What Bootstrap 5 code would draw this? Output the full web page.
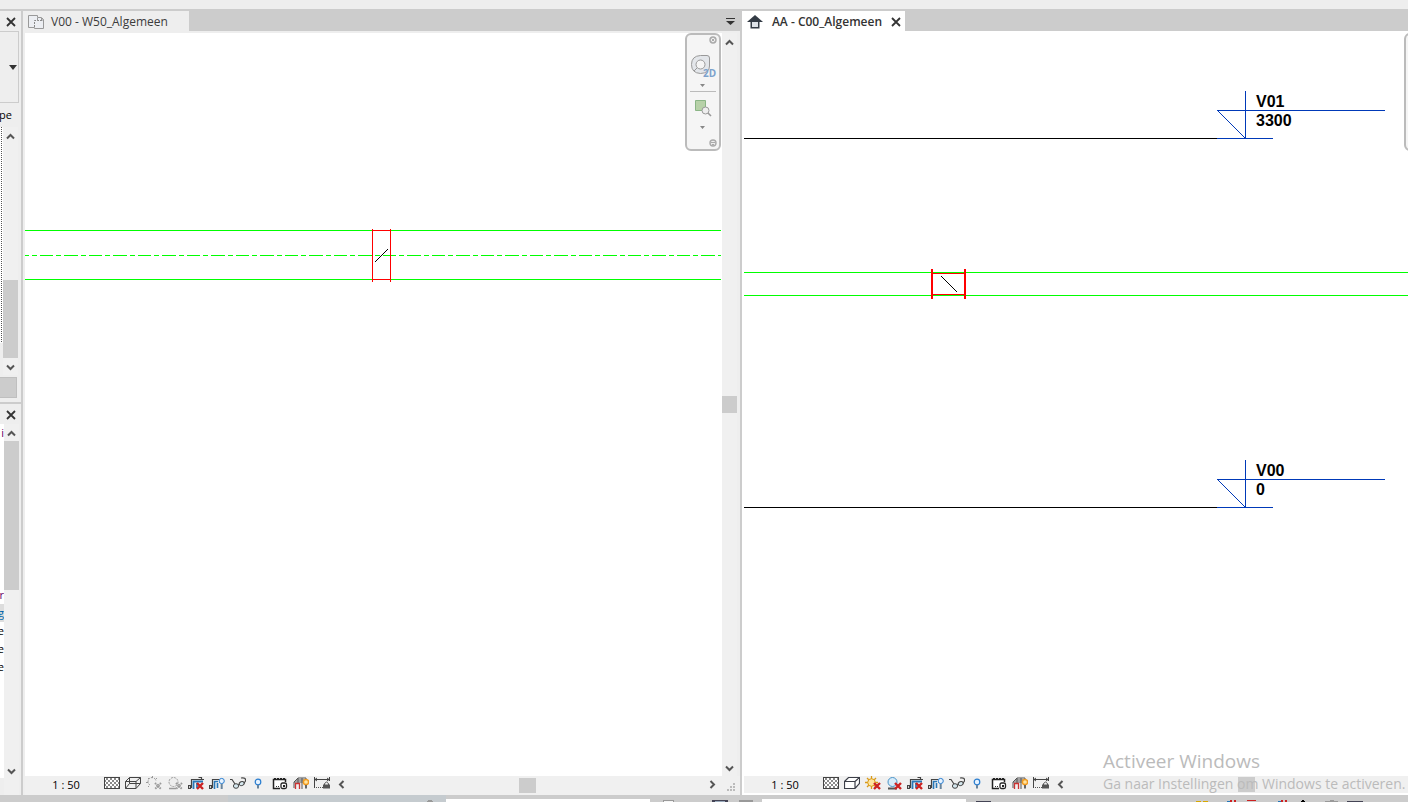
<!DOCTYPE html>
<html lang="nl">
<head>
<meta charset="utf-8">
<meta name="viewport" content="width=device-width, initial-scale=1">
<title>V00 - W50_Algemeen</title>
<link href="https://cdn.jsdelivr.net/npm/bootstrap@5.3.0/dist/css/bootstrap.min.css" rel="stylesheet">
<script src="https://cdn.jsdelivr.net/npm/bootstrap@5.3.0/dist/js/bootstrap.bundle.min.js"></script>
<style>
body { background: #ccc; font-family: "Open Sans", sans-serif; font-size: 11px; line-height: 16px; color: #3c3c3c; }
button { border: 0; padding: 0; background: none; color: inherit; display: flex; align-items: center; justify-content: center; flex-shrink: 0; }
svg { display: block; flex-shrink: 0; }
.ribbon-edge { height: 9px; background: #eee; }
.workspace { padding-top: 2px; gap: 2px; }
.side { width: 21px; gap: 2px; }
.side-pane { background: #eee; }
.props { height: 391px; }
.close-row { height: 20px; padding: 1px 4px 0 0; }
.type-box { height: 72px; width: 19px; border: 1px solid #ccc; border-left: 0; }
.type-label { height: 24px; width: 12px; font-size: 11px; color: #000; }
.prop-list { height: 248px; width: 18px; }
.prop-cells { width: 3px; height: 216px; background: #fff; border-left: 1px solid #fff; }
.prop-cells i { width: 1px; height: 100%; display: block; background: repeating-linear-gradient(#555 0 1px, #fff 1px 2px); }
.apply-btn { width: 17px; height: 21px; margin-top: 2px; background: #ccc; border: 1px solid #bfbfbf; border-left: 0; }
.tree { width: 4px; background: #fff; font-size: 11px; color: #000; margin-bottom: 17px; }
.tree div { height: 18px; line-height: 18px; }
.tree .tree-gap { height: 144px; }
.tree .folder { color: #606; }
.tree .picked { background: #ddd; color: #06a; }
.scroll-v { width: 15px; background: #f0f0f0; }
.scroll-v button { height: 17px; padding-top: 2px; }
.bar-thumb { background: #ccc; flex-shrink: 0; }
.thumb-a { height: 78px; }
.thumb-b { height: 149px; }
.thumb-c { height: 17px; }
.thumb-h { width: 17px; height: 15px; }
.view-left { flex: 717 1 0; min-width: 0; }
.view-right { flex: 666 1 0; min-width: 0; }
.tabs { height: 20px; background: #ccc; }
.doc-tab { gap: 8px; padding: 2px 4px 0 5px; background: #eee; color: #3c3c3c; text-decoration: none; font-size: 12px; }
.tab-left { width: 166px; gap: 7px; }
.tab-right { width: 163px; background: #fff; color: #333; font-weight: 600; justify-content: space-between; }
.tab-menu { width: 20px; }
.view-frame { background: #eee; padding: 2px 3px 0 2px; }
.sheet { background: #fff; min-width: 0; overflow: hidden; }
.level { font: bold 16px "Liberation Sans", sans-serif; fill: #000; }
.status { height: 19px; background: #f0f0f0; overflow: hidden; }
.status-left { margin-left: 2px; }
.status-right { height: 17px; margin-left: 2px; }
.status-end { height: 2px; background: #fff; }
.scale { width: 79px; height: 17px; font-size: 11px; color: #000; padding-left: 3px; }
.tools { gap: 5px; }
.tools button { width: 16px; height: 16px; }
.arrow-h { width: 15px; height: 17px; }
.track-before { flex: 170 1 0; }
.track-after { flex: 170 1 0; }
.track-short { flex: 153 1 0; }
.grip { width: 20px; height: 19px; }
.navbar-tools { top: 0; right: 1px; width: 36px; height: 118px; background: #f5f5f5; border: 2px solid #bbb; border-radius: 6px; }
.nav-cut { top: 2px; right: -32px; }
.notice { left: 361px; bottom: 0; color: #bbb; white-space: nowrap; pointer-events: none; }
.notice-big { font-size: 19px; line-height: 24px; }
.notice-small { font-size: 14px; line-height: 22px; }
.taskbar-edge { height: 7px; }
</style>
</head>
<body class="vh-100 d-flex flex-column overflow-hidden">
<svg width="0" height="0" class="position-absolute" aria-hidden="true">
<defs>
<pattern id="check" width="4" height="4" patternUnits="userSpaceOnUse"><path d="M0 0h2v2H0zM2 2h2v2H2z" fill="#8a8a8a"/></pattern>
<symbol id="up" viewBox="0 0 9 7"><path d="M1 5.500 4.500 2 8 5.500" fill="none" stroke="#555" stroke-width="2"/></symbol>
<symbol id="down" viewBox="0 0 9 7"><path d="M1 1.500 4.500 5 8 1.500" fill="none" stroke="#555" stroke-width="2"/></symbol>
<symbol id="cross" viewBox="0 0 10 10"><path d="M1 1 9 9M9 1 1 9" fill="none" stroke="#333" stroke-width="1.800"/></symbol>
<symbol id="redx" viewBox="0 0 16 16"><path d="M9 7 15 13M15 7 9 13" stroke="#c22" stroke-width="2.400" fill="none"/></symbol>
<symbol id="detail" viewBox="0 0 16 16"><rect x=".5" y="1.500" width="15" height="11" fill="#fff"/><rect x=".5" y="1.500" width="15" height="11" fill="url(#check)" stroke="#444"/></symbol>
<symbol id="box" viewBox="0 0 16 16"><path d="M.5 5.500 4.500 1.500h11v6l-4.500 5H.5zM.5 5.500H11v7M11 5.500l4.500-4" fill="#fff" stroke="#3c3f48" stroke-width="1.200"/></symbol>
<symbol id="wirebox" viewBox="0 0 16 16"><path d="M.5 5.500 4.500 1.500h11v6l-4.500 5H.5zM.5 5.500H11v7M11 5.500l4.500-4M4.500 1.500v6h11M4.500 7.500l-4 5" fill="none" stroke="#444"/></symbol>
<symbol id="sun" viewBox="0 0 16 16"><path d="M6.500 0v13M0 6.500h13M2 2l9 9M11 2l-9 9" stroke="#d99a16" stroke-width="1.300"/><circle cx="6.500" cy="6.500" r="3.800" fill="#ffe6a0" stroke="#d99a16"/><use href="#redx"/></symbol>
<symbol id="sunoff" viewBox="0 0 16 16"><path d="M6.500 0v2M0 6.500h2M2 2l1 1M11 2l-1 1M2 11l1-1M4 9a4 4 0 1 1 6-4" stroke="#999" fill="none" stroke-dasharray="2 1"/><path d="M9 7l6 6M15 7l-6 6" stroke="#999" stroke-width="2" stroke-dasharray="1.500 .7"/></symbol>
<symbol id="shadow" viewBox="0 0 16 16"><path d="M2 12.500h9" stroke="#555" stroke-width="2"/><circle cx="6.500" cy="6" r="4.500" fill="#d7ecfa" stroke="#4a94c8"/><use href="#redx"/></symbol>
<symbol id="shadowoff" viewBox="0 0 16 16"><path d="M2 12.500h7" stroke="#999" stroke-width="1.500"/><circle cx="6.500" cy="6" r="4.500" fill="#eee" stroke="#999" stroke-dasharray="2 1"/><path d="M9 7l6 6M15 7l-6 6" stroke="#999" stroke-width="2" stroke-dasharray="1.500 .7"/></symbol>
<symbol id="cropx" viewBox="0 0 16 16"><path d="M.5 9.500h2v3h-2zM3.500 12V3.500H16M10.500 1.500h3v2" fill="none" stroke="#444" stroke-width="1.200"/><path d="M5.500 13V5.500H15M9 7v5" fill="none" stroke="#2878b8" stroke-width="1.800"/><use href="#redx"/></symbol>
<symbol id="cropbulb" viewBox="0 0 16 16"><path d="M.5 9.500h2v3h-2zM3.500 12V3.500H10" fill="none" stroke="#444" stroke-width="1.200"/><path d="M5.500 13V5.500H9M8.500 7v5" fill="none" stroke="#2878b8" stroke-width="1.600"/><circle cx="12.700" cy="5" r="2.600" fill="#e7f3ff" stroke="#2b7ed0"/><path d="M12.700 8v5" stroke="#68849c" stroke-width="2"/></symbol>
<symbol id="glasses" viewBox="0 0 16 16"><path d="M0 3.500h2L5 8M11 2q5-1 4.500 3l-2 3M8 9l1.500-1" fill="none" stroke="#444" stroke-width="1.200"/><ellipse cx="6" cy="10" rx="2.600" ry="2.300" fill="#d6e8ef" stroke="#444"/><ellipse cx="11.700" cy="7.600" rx="2.500" ry="2" transform="rotate(-25 11.700 7.600)" fill="#d6e8ef" stroke="#444"/></symbol>
<symbol id="bulb" viewBox="0 0 16 16"><circle cx="7" cy="6" r="2.800" fill="#e7f3ff" stroke="#2b7ed0" stroke-width="1.200"/><path d="M7 9v3.500" stroke="#68849c" stroke-width="2"/></symbol>
<symbol id="template" viewBox="0 0 16 16"><path d="M8 12.500H1.500v-9h12V6" fill="#fff" stroke="#222" stroke-width="1.500"/><path d="M2 2.500h12" stroke="#222" stroke-dasharray="2 1"/><rect x="9" y="7" width="5.500" height="5.500" rx="1.500" fill="#fff" stroke="#222" stroke-width="1.300"/><path d="M11 9h2v2h-2z" fill="#222"/><path d="M4 10.500h4" fill="none" stroke="#333" stroke-dasharray="1 1"/></symbol>
<symbol id="model" viewBox="0 0 16 16"><path d="M1 12V6l4-4h8v10M1 6h9M5 2v5M9 2v11M3 4h8" fill="none" stroke="#555"/><path d="M2.500 13V7.500h4V13" fill="none" stroke="#c33" stroke-width="1.300"/><circle cx="13" cy="6" r="2.600" fill="#ffe4a0" stroke="#f09a20" stroke-width="1.500"/><path d="M13 9v3.500" stroke="#666" stroke-width="2"/></symbol>
<symbol id="locked" viewBox="0 0 16 16"><path d="M.5 1v11M15.500 1v4M1 3.500h14M3 2 1 3.500 3 5M13 2l2 1.500L13 5" fill="none" stroke="#444"/><path d="M2 11.500h7" stroke="#555" stroke-dasharray="1 1"/><path d="M10.500 9V7.500q2-3 4 0V9" fill="none" stroke="#555"/><path d="M9 8.500h7v4H9z" fill="#555"/></symbol>
<symbol id="navtools" viewBox="0 0 32 114">
<circle cx="26" cy="5" r="3" fill="#eee" stroke="#aaa" stroke-width="1.400"/><path d="m24.500 3.500 3 3m0-3-3 3" stroke="#aaa"/>
<path d="M13.500 20.500H20q2.500 0 2.500 2.500v8q0 7-9 7.500-9-.5-9-9t9-9z" fill="#e3e6ea" stroke="#999"/><circle cx="13.500" cy="29.500" r="4.500" fill="#f5f5f5" stroke="#999"/><path d="m10 33-3 3" stroke="#999"/>
<text x="16" y="42" font-family="Open Sans, sans-serif" font-size="10" font-weight="700" fill="#7da2cc">2D</text>
<path d="M13 49h5l-2.500 3zM13 91h5l-2.500 3z" fill="#888"/><path d="M3 56.500h26" stroke="#bbb"/>
<path d="M8.500 65.500h10v10h-10z" fill="#b7d1a8" stroke="#8ab585"/><circle cx="18.500" cy="75.500" r="3.500" fill="#eee" stroke="#999"/><path d="m21 78 3 3" stroke="#999" stroke-width="1.600"/>
<circle cx="26" cy="108" r="3" fill="#eee" stroke="#aaa" stroke-width="1.400"/><path d="M24 107.500h4M25 109.500h2" stroke="#aaa"/></symbol>
</defs>
</svg>

<header class="ribbon-edge flex-shrink-0"></header>
<main class="workspace d-flex flex-grow-1 overflow-hidden">
  <aside class="side d-flex flex-column flex-shrink-0 overflow-hidden">
    <section class="side-pane props flex-shrink-0">
      <div class="close-row d-flex justify-content-end"><button aria-label="Sluiten"><svg width="12" height="10"><use href="#cross"/></svg></button></div>
      <button class="type-box justify-content-end" aria-label="Type"><svg width="10" height="5"><path d="M1 0h8L5 5z" fill="#333"/></svg></button>
      <div class="type-label d-flex justify-content-end align-items-center">pe</div>
      <div class="prop-list d-flex">
        <div class="prop-cells"><i></i></div>
        <div class="scroll-v d-flex flex-column"><button aria-label="Omhoog"><svg width="9" height="7"><use href="#up"/></svg></button><div class="flex-grow-1"></div><div class="bar-thumb thumb-a"></div><button aria-label="Omlaag"><svg width="9" height="7"><use href="#down"/></svg></button></div>
      </div>
      <button class="apply-btn" aria-label="Toepassen"></button>
    </section>
    <section class="side-pane flex-grow-1 d-flex flex-column">
      <div class="close-row d-flex justify-content-end"><button aria-label="Sluiten"><svg width="12" height="10"><use href="#cross"/></svg></button></div>
      <div class="d-flex flex-grow-1">
        <div class="tree"><div class="folder d-flex justify-content-end">i</div><div class="tree-gap"></div><div class="folder d-flex justify-content-end">r</div><div class="picked d-flex justify-content-end">g</div><div class="d-flex justify-content-end">e</div><div class="d-flex justify-content-end">e</div><div class="d-flex justify-content-end">e</div></div>
        <div class="scroll-v d-flex flex-column"><button aria-label="Omhoog"><svg width="9" height="7"><use href="#up"/></svg></button><div class="bar-thumb thumb-b"></div><div class="flex-grow-1"></div><button class="mb-3" aria-label="Omlaag"><svg width="9" height="7"><use href="#down"/></svg></button></div>
      </div>
    </section>
  </aside>

  <section class="view-left d-flex flex-column">
    <div class="tabs d-flex justify-content-between flex-shrink-0">
      <a href="#" class="doc-tab tab-left d-flex align-items-center"><svg width="16" height="14" viewBox="0 0 16 14"><path d="M.5.5h9v2h4l2 2v9h-9v-1h-6z" fill="#eceef2" stroke="#999"/><path d="M6.500 12V5.500H14" fill="none" stroke="#888" stroke-dasharray="2 1"/><path d="M9.500 3v3M13.500 3v2h2" fill="none" stroke="#999"/></svg><span>V00 - W50_Algemeen</span></a>
      <button class="tab-menu" aria-label="Vensters"><svg width="9" height="7"><path d="M0 .5h9" stroke="#333"/><path d="M0 3h9L4.500 7z" fill="#333"/></svg></button>
    </div>
    <div class="view-frame d-flex flex-grow-1">
      <div class="sheet position-relative flex-grow-1">
        <svg width="100%" height="100%" class="position-absolute" shape-rendering="crispEdges" fill="none">
          <path d="M0 197.500h696M0 246.500h696" stroke="#0f0"/>
          <path d="M0 222.500h696" stroke="#0f0" stroke-dasharray="5 3 14 3 5 3 13 3" stroke-dashoffset="18"/>
          <path d="M347.500 196v53M365.500 196v53M347 197.500h19M347 246.500h19" stroke="#f00"/>
          <path d="M350 229 363 216" stroke="#000"/>
        </svg>
        <div class="navbar-tools position-absolute"><svg width="32" height="114"><use href="#navtools"/></svg></div>
      </div>
      <div class="scroll-v d-flex flex-column justify-content-between"><button aria-label="Omhoog"><svg width="9" height="7"><use href="#up"/></svg></button><div class="bar-thumb thumb-c"></div><button aria-label="Omlaag"><svg width="9" height="7"><use href="#down"/></svg></button></div>
    </div>
    <div class="side-pane flex-shrink-0"><div class="status status-left d-flex">
      <button class="scale">1 : 50</button>
      <div class="tools d-flex">
        <button aria-label="Detailniveau"><svg width="16" height="16"><use href="#detail"/></svg></button>
        <button aria-label="Visuele stijl"><svg width="16" height="16"><use href="#wirebox"/></svg></button>
        <button aria-label="Zonnepad"><svg width="16" height="16"><use href="#sunoff"/></svg></button>
        <button aria-label="Schaduwen"><svg width="16" height="16"><use href="#shadowoff"/></svg></button>
        <button aria-label="Bijsnijden"><svg width="16" height="16"><use href="#cropx"/></svg></button>
        <button aria-label="Bijsnijdgebied tonen"><svg width="16" height="16"><use href="#cropbulb"/></svg></button>
        <button aria-label="Tijdelijk verbergen"><svg width="16" height="16"><use href="#glasses"/></svg></button>
        <button aria-label="Verborgen elementen"><svg width="16" height="16"><use href="#bulb"/></svg></button>
        <button aria-label="Weergavesjabloon"><svg width="16" height="16"><use href="#template"/></svg></button>
        <button aria-label="Analysemodel"><svg width="16" height="16"><use href="#model"/></svg></button>
        <button aria-label="Maatvoeringen"><svg width="16" height="16"><use href="#locked"/></svg></button>
      </div>
      <button class="arrow-h ms-1" aria-label="Links"><svg width="7" height="9"><path d="M5.500 1 2 4.500 5.500 8" fill="none" stroke="#555" stroke-width="2"/></svg></button>
      <div class="track-before"></div><div class="bar-thumb thumb-h mt-auto mb-auto"></div><div class="track-after"></div>
      <button class="arrow-h" aria-label="Rechts"><svg width="7" height="9"><path d="M1.500 1 5 4.500 1.500 8" fill="none" stroke="#555" stroke-width="2"/></svg></button>
      <svg class="grip" viewBox="0 0 20 19"><path d="M13 7h2v2h-2zM10 10h2v2h-2zM13 10h2v2h-2zM7 13h2v2H7zM10 13h2v2h-2zM13 13h2v2h-2z" fill="#bbb"/></svg>
    </div></div>
  </section>

  <section class="view-right d-flex flex-column position-relative">
    <div class="tabs d-flex flex-shrink-0">
      <div class="doc-tab tab-right d-flex align-items-center"><svg width="16" height="14" viewBox="0 0 16 14"><path d="M3.500 6h9v7.500h-9z" fill="#333b45"/><path d="M5 7h6v5H5z" fill="#dde2e8"/><path d="M8 0l8 7H0z" fill="#333b45"/></svg><a href="#" class="text-reset text-decoration-none">AA - C00_Algemeen</a><button aria-label="Sluiten"><svg width="10" height="10"><use href="#cross"/></svg></button></div>
    </div>
    <div class="sheet position-relative flex-grow-1">
      <svg width="100%" height="100%" class="position-absolute" shape-rendering="crispEdges" fill="none">
        <path d="M2 241.500h2000M2 264.500h2000" stroke="#0f0"/>
        <path d="M189 242.500h35M189 263.500h35" stroke="#f00"/><path d="M190 238v30M223 238v30" stroke="#f00" stroke-width="2"/>
        <path d="M199 245l16 16" stroke="#000"/>
        <path d="M2 107.500h473M2 476.500h473" stroke="#000"/>
        <g id="head" stroke="#0039b8"><path d="M475 107.500h56M475 79.500h168M503.500 60v48M475 79l28 28"/></g>
        <use href="#head" y="369"/>
        <g class="level"><text x="514" y="76">V01</text><text x="514" y="95">3300</text><text x="514" y="445">V00</text><text x="514" y="464">0</text></g>
      </svg>
      <div class="navbar-tools nav-cut position-absolute"></div>
    </div>
    <div class="bg-white flex-shrink-0"><div class="status status-right d-flex">
      <button class="scale">1 : 50</button>
      <div class="tools d-flex">
        <button aria-label="Detailniveau"><svg width="16" height="16"><use href="#detail"/></svg></button>
        <button aria-label="Visuele stijl"><svg width="16" height="16"><use href="#box"/></svg></button>
        <button aria-label="Zonnepad"><svg width="16" height="16"><use href="#sun"/></svg></button>
        <button aria-label="Schaduwen"><svg width="16" height="16"><use href="#shadow"/></svg></button>
        <button aria-label="Bijsnijden"><svg width="16" height="16"><use href="#cropx"/></svg></button>
        <button aria-label="Bijsnijdgebied tonen"><svg width="16" height="16"><use href="#cropbulb"/></svg></button>
        <button aria-label="Tijdelijk verbergen"><svg width="16" height="16"><use href="#glasses"/></svg></button>
        <button aria-label="Verborgen elementen"><svg width="16" height="16"><use href="#bulb"/></svg></button>
        <button aria-label="Weergavesjabloon"><svg width="16" height="16"><use href="#template"/></svg></button>
        <button aria-label="Analysemodel"><svg width="16" height="16"><use href="#model"/></svg></button>
        <button aria-label="Maatvoeringen"><svg width="16" height="16"><use href="#locked"/></svg></button>
      </div>
      <button class="arrow-h ms-1" aria-label="Links"><svg width="7" height="9"><path d="M5.500 1 2 4.500 5.500 8" fill="none" stroke="#555" stroke-width="2"/></svg></button>
      <div class="track-before"></div><div class="bar-thumb thumb-h mt-auto mb-auto"></div><div class="track-short"></div>
    </div><div class="status-end"></div></div>
    <div class="notice position-absolute"><div class="notice-big">Activeer Windows</div><div class="notice-small">Ga naar Instellingen om Windows te activeren.</div></div>
  </section>
</main>
<footer class="taskbar-edge flex-shrink-0">
  <svg width="100%" height="7" shape-rendering="crispEdges">
    <path d="M228 0h218v7H228z" fill="#c5cbcf"/><path d="M426 7q4-4 8 0z" fill="#999"/>
    <path d="M446 4h204v3H446zM762 4h204v3H762z" fill="#fff"/>
    <path d="M663 5h10v2h-10z" fill="#f5f5f5" stroke="#999"/>
    <path d="M712 5h16v2h-16zM976 6h15v1h-15zM1347 6h16v1h-16z" fill="#445"/><path d="M715 6h10v1h-10z" fill="#9ab"/><path d="M739 5h14v2h-14zM1325 6h13v1h-13zM1330 5h4v2h-4z" fill="#999"/>
    <path d="M1196 6h5v1h-5zM1203 6h5v1h-5z" fill="#d8a800"/>
    <path d="M1227 6h3v1h-3zM1278 6h3v1h-3z" fill="#27b"/><path d="M1230 5h2v2h-2zM1234 5h2v2h-2zM1281 5h2v2h-2zM1285 5h2v2h-2zM1247 5h9v1h-9z" fill="#c22"/><path d="M1302 5h2v1h1v1h-4v-1h1z" fill="#000"/>
  </svg>
</footer>
</body>
</html>
